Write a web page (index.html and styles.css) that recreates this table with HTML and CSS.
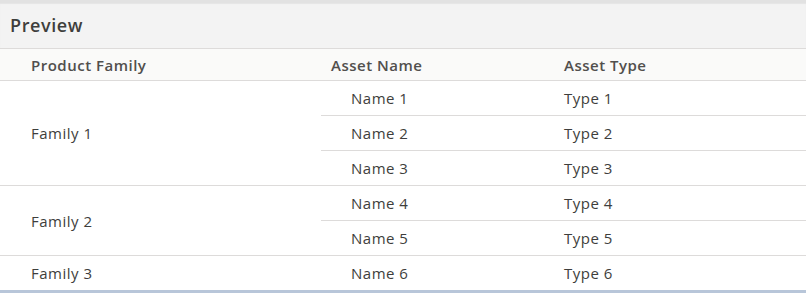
FILE: index.html
```html
<!DOCTYPE html>
<html>
<head>
<meta charset="utf-8">
<link rel="stylesheet" href="styles.css">
</head>
<body>
<div class="panel">
  <div class="panel-header"><h2 class="panel-title">Preview</h2></div>
  <table class="preview-table">
    <thead>
      <tr>
        <th class="col-family">Product Family</th>
        <th class="col-name">Asset Name</th>
        <th class="col-type">Asset Type</th>
      </tr>
    </thead>
    <tbody>
      <tr class="group-start">
        <td class="cell-family" rowspan="3">Family 1</td>
        <td class="cell-name">Name 1</td>
        <td class="cell-type">Type 1</td>
      </tr>
      <tr>
        <td class="cell-name">Name 2</td>
        <td class="cell-type">Type 2</td>
      </tr>
      <tr>
        <td class="cell-name">Name 3</td>
        <td class="cell-type">Type 3</td>
      </tr>
      <tr class="group-start">
        <td class="cell-family" rowspan="2">Family 2</td>
        <td class="cell-name">Name 4</td>
        <td class="cell-type">Type 4</td>
      </tr>
      <tr>
        <td class="cell-name">Name 5</td>
        <td class="cell-type">Type 5</td>
      </tr>
      <tr class="group-start">
        <td class="cell-family">Family 3</td>
        <td class="cell-name">Name 6</td>
        <td class="cell-type">Type 6</td>
      </tr>
    </tbody>
  </table>
</div>
</body>
</html>
```

FILE: styles.css
```css
html, body {
  margin: 0;
  padding: 0;
  background: #ffffff;
}
body {
  font-family: "Open Sans", "Noto Sans", sans-serif;
  color: #3e3e3c;
}
.panel {
  width: 806px;
  height: 293px;
  box-sizing: border-box;
  border-top: 3px solid #e2e2e2;
  border-bottom: 3px solid #b8c6d9;
  overflow: hidden;
  position: relative;
}
.panel-header {
  background: #f3f3f3;
  height: 45px;
  border-bottom: 1px solid #dddbda;
  box-shadow: inset 0 1px 1px rgba(0,0,0,0.06);
  display: flex;
  align-items: center;
  padding-left: 10px;
}
.panel-title {
  margin: 0;
  font-size: 18px;
  font-weight: 600;
  color: #3e3e3c;
  letter-spacing: 0.6px;
  position: relative;
  top: -1px;
}
.preview-table {
  width: 100%;
  border-collapse: collapse;
  font-size: 15px;
  letter-spacing: 0.5px;
}
.preview-table th {
  background: #fafaf9;
  height: 31px;
  padding: 0;
  text-align: left;
  font-weight: 600;
  color: #514f4d;
  border-bottom: 1px solid #dddbda;
}
.col-family { width: 321px; padding-left: 31px !important; box-sizing: border-box; }
.col-name { width: 233px; padding-left: 10px !important; box-sizing: border-box; }
.col-type { padding-left: 10px !important; }
.preview-table td {
  height: 34px;
  padding: 0;
  border-top: 1px solid #dddbda;
  vertical-align: middle;
}
.preview-table tbody tr:first-child td {
  border-top: none;
}
.cell-family { padding-left: 31px !important; }
.cell-name { padding-left: 30px !important; }
.cell-type { padding-left: 10px !important; }
```
